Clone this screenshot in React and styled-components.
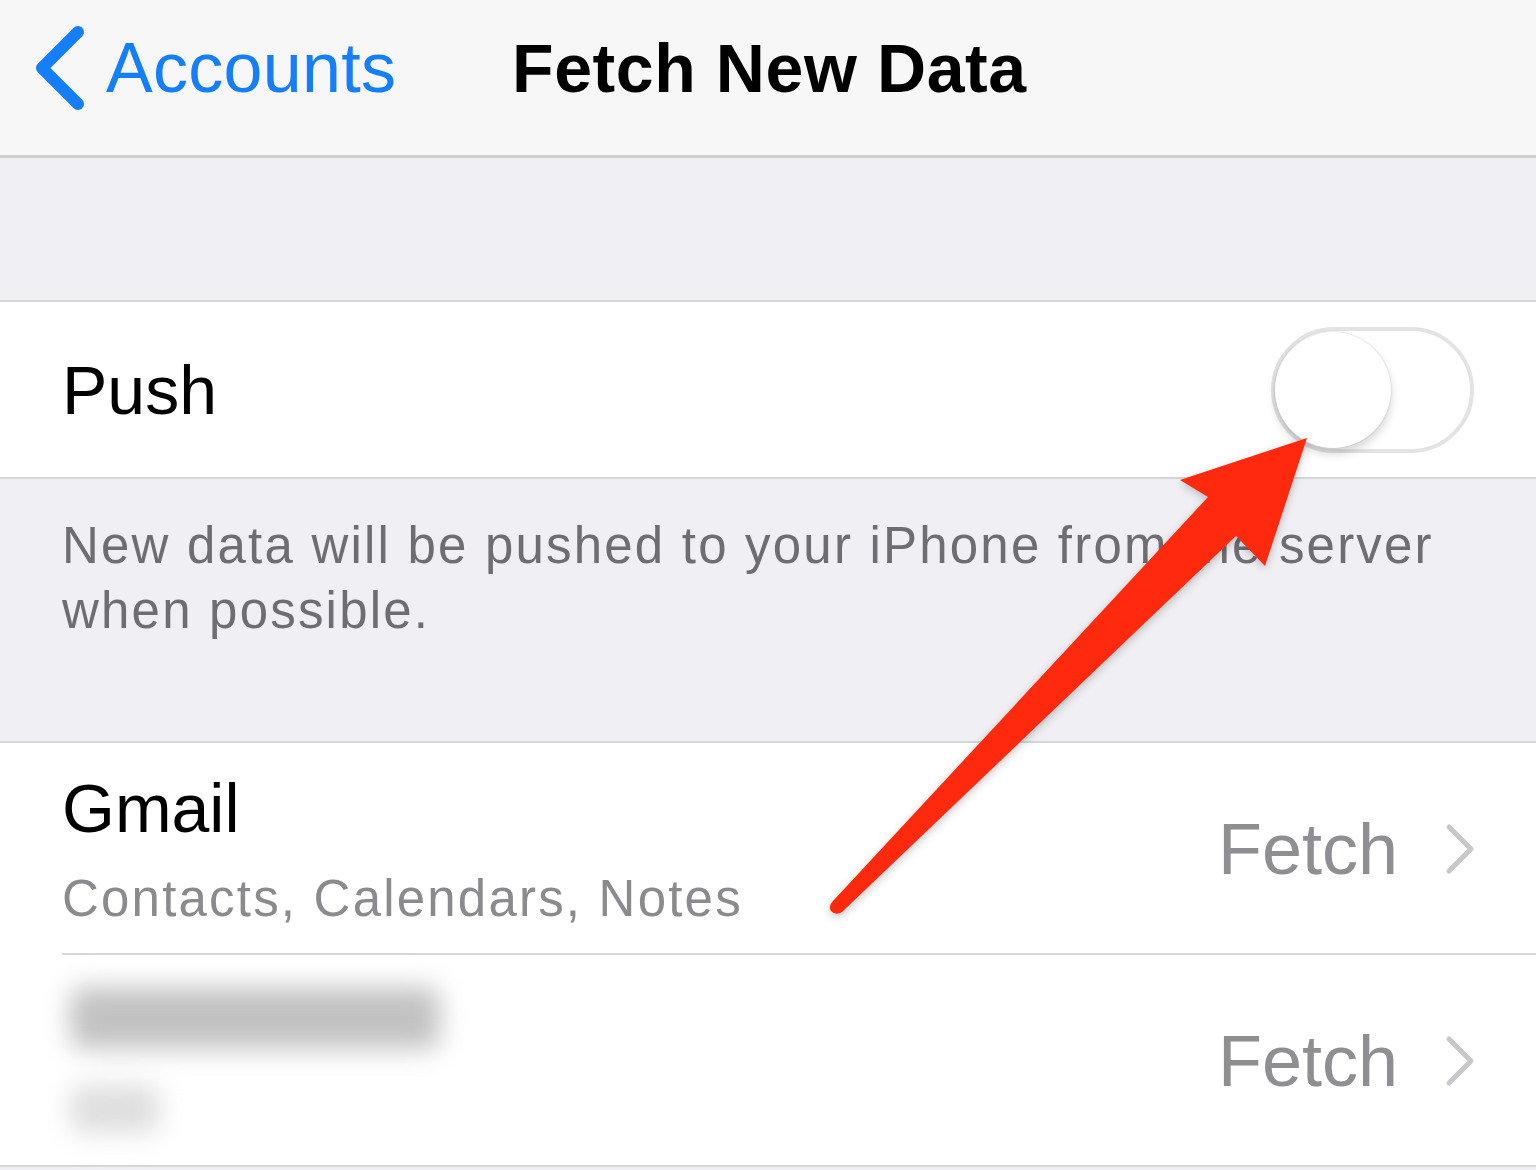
import React from "react";
import styled, { createGlobalStyle } from "styled-components";

const GlobalStyle = createGlobalStyle`
  html, body {
    margin: 0;
    padding: 0;
    background: #efeff4;
  }
  body {
    font-family: "Liberation Sans", Arial, sans-serif;
    -webkit-font-smoothing: antialiased;
  }
`;

const Screen = styled.div`
  position: relative;
  width: 1536px;
  height: 1170px;
  overflow: hidden;
  background: #efeff4;
`;

const NavBar = styled.div`
  height: 158px;
  background: #f7f7f7;
  border-bottom: 3px solid #cfcfd2;
  display: flex;
  align-items: center;
  padding: 0 0 20px 34px;
  box-sizing: border-box;
`;

const BackButton = styled.div`
  display: flex;
  align-items: center;
  gap: 20px;
  color: #147efb;
  font-size: 70px;
  letter-spacing: 0.3px;
  width: 478px;
  svg {
    flex: none;
  }
`;

const Title = styled.div`
  font-size: 68px;
  font-weight: 700;
  letter-spacing: 0.6px;
  color: #000;
`;

const Gap = styled.div`
  height: ${(p) => p.h}px;
  background: #efeff4;
`;

const Group = styled.div`
  background: #fff;
  border-top: 2px solid #d6d6da;
  border-bottom: 2px solid #d6d6da;
`;

const Row = styled.div`
  height: ${(p) => p.h}px;
  display: flex;
  align-items: center;
  justify-content: space-between;
  padding: 0 60px 0 62px;
  box-sizing: border-box;
`;

const Label = styled.div`
  font-size: 68px;
  color: #000;
`;

const Sub = styled.div`
  font-size: 51px;
  letter-spacing: 2.2px;
  color: #8a8a8f;
  margin-top: 22px;
`;

const Divider = styled.div`
  height: 2px;
  background: #d6d6da;
  margin-left: 62px;
`;

const Toggle = styled.div`
  position: relative;
  width: 203px;
  height: 126px;
  border-radius: 63px;
  border: 4px solid #e3e3e6;
  box-sizing: border-box;
  background: #fff;
  margin-right: 2px;
`;

const Knob = styled.div`
  position: absolute;
  left: 0px;
  top: 1px;
  width: 116px;
  height: 116px;
  border-radius: 50%;
  background: #fff;
  box-shadow: 0 6px 10px rgba(0, 0, 0, 0.16), 0 0 2px rgba(0, 0, 0, 0.2);
`;

const Footer = styled.div`
  padding: 34px 62px 0;
  height: 262px;
  box-sizing: border-box;
  font-size: 51px;
  letter-spacing: 2.2px;
  line-height: 65px;
  color: #6d6d72;
`;

const Detail = styled.div`
  display: flex;
  align-items: center;
  gap: 46px;
  font-size: 72px;
  color: #8e8e93;
  margin-top: 2px;
`;

const Blur = styled.div`
  display: flex;
  flex-direction: column;
  gap: 36px;
  margin-left: 8px;
  filter: blur(13px);
`;

const BlurBar = styled.div`
  width: ${(p) => p.w}px;
  height: ${(p) => p.h}px;
  background: ${(p) => p.c};
  border-radius: 14px;
`;

const Arrow = styled.svg`
  position: absolute;
  left: 0;
  top: 0;
  pointer-events: none;
`;

const Chevron = () => (
  <svg width="32" height="52" viewBox="0 0 32 52">
    <polyline
      points="5,4 27,26 5,48"
      fill="none"
      stroke="#c7c7cc"
      strokeWidth="5"
      strokeLinecap="round"
      strokeLinejoin="round"
    />
  </svg>
);

const App = () => {
  return (
    <Screen>
      <GlobalStyle />
      <NavBar>
        <BackButton>
          <svg width="52" height="86" viewBox="0 0 52 86">
            <polyline
              points="44,7 8,43 44,79"
              fill="none"
              stroke="#147efb"
              strokeWidth="12"
              strokeLinecap="round"
              strokeLinejoin="round"
            />
          </svg>
          <span>Accounts</span>
        </BackButton>
        <Title>Fetch New Data</Title>
      </NavBar>

      <Gap h={142} />

      <Group>
        <Row h={175}>
          <Label>Push</Label>
          <Toggle>
            <Knob />
          </Toggle>
        </Row>
      </Group>

      <Footer>
        New data will be pushed to your iPhone from the server
        <br />
        when possible.
      </Footer>

      <Group>
        <Row h={210}>
          <div>
            <Label>Gmail</Label>
            <Sub>Contacts, Calendars, Notes</Sub>
          </div>
          <Detail>
            Fetch
            <Chevron />
          </Detail>
        </Row>
        <Divider />
        <Row h={210}>
          <Blur>
            <BlurBar w={370} h={62} c="#c2c2c2" />
            <BlurBar w={90} h={48} c="#dedede" />
          </Blur>
          <Detail>
            Fetch
            <Chevron />
          </Detail>
        </Row>
      </Group>

      <Arrow width="1536" height="1170" viewBox="0 0 1536 1170">
        <defs>
          <filter id="sh" x="-10%" y="-10%" width="120%" height="120%">
            <feDropShadow dx="0" dy="3" stdDeviation="4" floodColor="#000" floodOpacity="0.22" />
          </filter>
        </defs>
        <path
          d="M1307,438 L1265,566 L1236,536 L842,912 Q836,916 831,911 Q828,906 833,901 L1208,497 L1180,480 Z"
          fill="#ff2a0e"
          filter="url(#sh)"
        />
      </Arrow>
    </Screen>
  );
};

export default App;
